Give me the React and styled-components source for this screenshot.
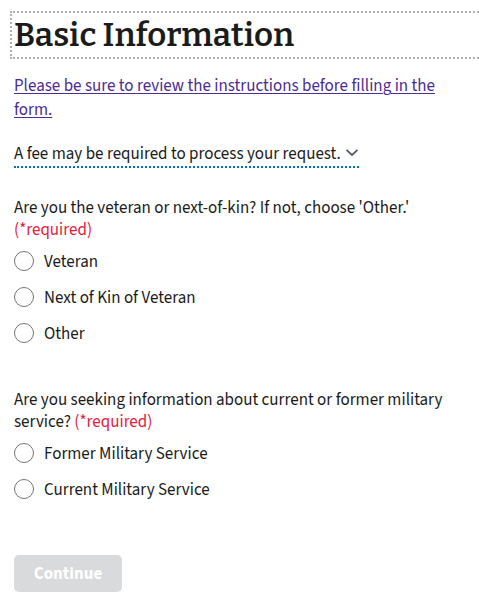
import React from "react";
import styled, { createGlobalStyle } from "styled-components";

const GlobalStyle = createGlobalStyle`
  html, body { margin: 0; padding: 0; background: #ffffff; }
  body {
    font-family: "Source Sans 3", "Lato", sans-serif;
    font-size: 17px;
    color: #1b1b1b;
    overflow: hidden;
  }
`;

const Page = styled.main`
  box-sizing: border-box;
  width: 100%;
  padding: 15px 14px 0 14px;
  display: flex;
  flex-direction: column;
`;

const Heading = styled.h1`
  margin: 0 -14px 0 0;
  font-family: "Bitter", "Liberation Serif", serif;
  font-weight: 600;
  font-size: 33px;
  line-height: 40px;
  color: #1b1b1b;
  outline: 2px dotted #aeb0b5;
  outline-offset: 2px;
`;

const InstructionsLink = styled.a`
  margin-top: 19px;
  line-height: 24px;
  color: #4c2c92;
  text-decoration: underline;
  text-underline-offset: 2px;
  text-decoration-thickness: 1px;
`;

const FeeToggle = styled.button`
  align-self: flex-start;
  margin-top: 21px;
  padding: 0;
  background: none;
  border: none;
  border-bottom: 2px dotted #0071bb;
  font: inherit;
  line-height: 23px;
  color: #1b1b1b;
  display: flex;
  align-items: center;
  gap: 4px;
  cursor: pointer;
`;

const Chevron = styled.svg`
  width: 14px;
  height: 9px;
  margin-top: -4px;
`;

const Fieldset = styled.fieldset`
  margin: ${(p) => p.$top}px 0 0 0;
  padding: 0;
  border: none;
  min-width: 0;
`;

const Legend = styled.legend`
  padding: 0;
  line-height: 22px;
`;

const Required = styled.span`
  color: #e31c3d;
`;

const OptionList = styled.div`
  margin-top: 10px;
  display: flex;
  flex-direction: column;
  gap: 14px;
`;

const Option = styled.label`
  display: flex;
  align-items: center;
  gap: 10px;
  line-height: 22px;
  cursor: pointer;
`;

const RadioCircle = styled.span`
  width: 20px;
  height: 20px;
  box-sizing: border-box;
  border-radius: 50%;
  border: 1px solid #757575;
  background: #fff;
  flex-shrink: 0;
  margin-top: -2px;
`;

const ContinueButton = styled.button`
  align-self: flex-start;
  margin-top: 54px;
  width: 108px;
  height: 37px;
  border: none;
  border-radius: 5px;
  background: #d9dadb;
  color: #ffffff;
  font-family: "Source Sans 3", "Lato", sans-serif;
  font-weight: 700;
  font-size: 17px;
  padding: 0;
`;

const RadioGroup = ({ top, legend, options }) => (
  <Fieldset $top={top}>
    <Legend>
      {legend} <Required>(*required)</Required>
    </Legend>
    <OptionList>
      {options.map((o) => (
        <Option key={o}>
          <RadioCircle />
          {o}
        </Option>
      ))}
    </OptionList>
  </Fieldset>
);

export default function App() {
  return (
    <>
      <GlobalStyle />
      <Page>
        <Heading>Basic Information</Heading>
        <InstructionsLink href="#">
          Please be sure to review the instructions before filling in the form.
        </InstructionsLink>
        <FeeToggle type="button">
          A fee may be required to process your request.
          <Chevron viewBox="0 0 14 9" fill="none">
            <path d="M1.5 1.8 L7 7 L12.5 1.8" stroke="#565c65" strokeWidth="1.8" />
          </Chevron>
        </FeeToggle>
        <RadioGroup
          top={29}
          legend="Are you the veteran or next-of-kin? If not, choose 'Other.'"
          options={["Veteran", "Next of Kin of Veteran", "Other"]}
        />
        <RadioGroup
          top={44}
          legend="Are you seeking information about current or former military service?"
          options={["Former Military Service", "Current Military Service"]}
        />
        <ContinueButton type="button">Continue</ContinueButton>
      </Page>
    </>
  );
}
